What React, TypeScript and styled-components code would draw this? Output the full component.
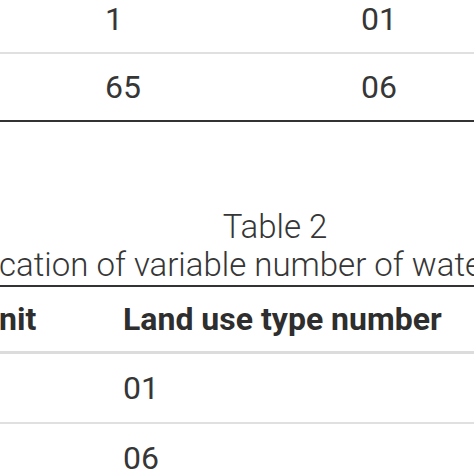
import React from "react";
import styled, { createGlobalStyle } from "styled-components";

const GlobalStyle = createGlobalStyle`
  html, body {
    margin: 0;
    padding: 0;
    background: #fff;
  }
  body {
    font-family: Roboto, "Liberation Sans", sans-serif;
    color: #363636;
  }
`;

const Viewport = styled.div`
  width: 474px;
  height: 474px;
  overflow: hidden;
  background: #fff;
`;

const Sheet = styled.div`
  margin-top: -14px;
  display: flex;
  flex-direction: column;
`;

const FirstTable = styled.div`
  border-bottom: 2px solid #333;
`;

const FirstRow = styled.div<{ $last?: boolean }>`
  display: grid;
  grid-template-columns: 105px 256px 1fr;
  height: 66px;
  align-items: center;
  border-bottom: ${(p) => (p.$last ? "none" : "2px solid #e0e0e0")};
  font-size: 32px;
`;

const Cell = styled.div`
  white-space: nowrap;
`;

const TableTitle = styled.div`
  width: 550px;
  margin-top: 86px;
  text-align: center;
  font-size: 33px;
  font-weight: 300;
  line-height: 38px;
`;

const Caption = styled.div`
  margin-left: -1px;
  width: 620px;
  white-space: nowrap;
  font-size: 33px;
  font-weight: 300;
  line-height: 38px;
  padding-bottom: 1px;
  border-bottom: 2px solid #333;
`;

const SecondTable = styled.div`
  margin-left: -22px;
`;

const HeadRow = styled.div`
  display: grid;
  grid-template-columns: 145px 1fr;
  height: 64px;
  align-items: center;
  border-bottom: 3px solid #dcdcdc;
  font-size: 32px;
  font-weight: 700;
  color: #2e2e2e;
`;

const BodyRow = styled.div`
  display: grid;
  grid-template-columns: 145px 1fr;
  height: 68px;
  align-items: center;
  border-bottom: 2px solid #e0e0e0;
  font-size: 32px;
`;

const firstRows = [
  ["", "1", "01"],
  ["", "65", "06"],
];

const secondRows = [
  ["", "01"],
  ["", "06"],
];

export default function App() {
  return (
    <>
      <GlobalStyle />
      <Viewport>
        <Sheet>
          <FirstTable>
            {firstRows.map((r, i) => (
              <FirstRow key={i} $last={i === firstRows.length - 1}>
                <Cell>{r[0]}</Cell>
                <Cell>{r[1]}</Cell>
                <Cell>{r[2]}</Cell>
              </FirstRow>
            ))}
          </FirstTable>
          <TableTitle>Table 2</TableTitle>
          <Caption>cation of variable number of water conservation</Caption>
          <SecondTable>
            <HeadRow>
              <Cell>Unit</Cell>
              <Cell>Land use type number</Cell>
            </HeadRow>
            {secondRows.map((r, i) => (
              <BodyRow key={i}>
                <Cell>{r[0]}</Cell>
                <Cell>{r[1]}</Cell>
              </BodyRow>
            ))}
          </SecondTable>
        </Sheet>
      </Viewport>
    </>
  );
}
